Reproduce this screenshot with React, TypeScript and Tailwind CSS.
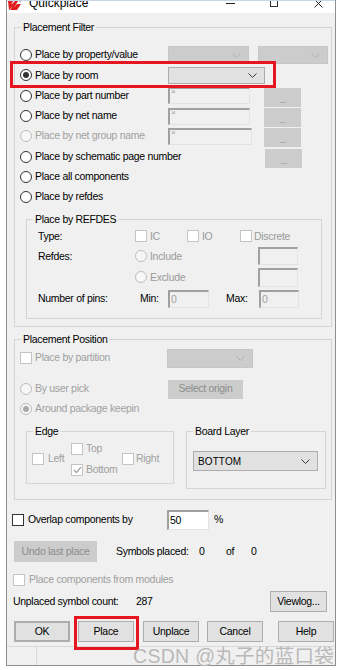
import React from 'react';

const FONT = "font-['Liberation_Sans',Arial,sans-serif]";

function Radio({ checked = false, disabled = false }: { checked?: boolean; disabled?: boolean }) {
  return (
    <div
      className={`w-[12px] h-[12px] shrink-0 rounded-full border flex items-center justify-center ${
        disabled ? 'border-[#bdbdbd] bg-[#f7f7f7]' : 'border-[#333333] bg-white'
      }`}
    >
      {checked && <div className={`w-[6px] h-[6px] rounded-full ${disabled ? 'bg-[#a8a8a8]' : 'bg-[#333333]'}`} />}
    </div>
  );
}

function Check({ checked = false, disabled = false }: { checked?: boolean; disabled?: boolean }) {
  return (
    <div
      className={`w-[12px] h-[12px] shrink-0 border flex items-center justify-center ${
        disabled ? 'border-[#c4c4c4] bg-white' : 'border-[#333333] bg-white'
      }`}
    >
      {checked && (
        <svg width="9" height="8" viewBox="0 0 9 8">
          <polyline points="1,4 3.5,6.5 8,1" fill="none" stroke={disabled ? '#a5a5a5' : '#333'} strokeWidth="1.2" />
        </svg>
      )}
    </div>
  );
}

function Chevron({ dark = false }: { dark?: boolean }) {
  return (
    <svg width="9" height="5" viewBox="0 0 9 5">
      <polyline points="0.5,0.5 4.5,4.5 8.5,0.5" fill="none" stroke={dark ? '#3a3a3a' : '#b0b0b0'} strokeWidth="1" />
    </svg>
  );
}

function Combo({ className, enabled = false, text }: { className: string; enabled?: boolean; text?: string }) {
  return (
    <div
      className={`flex items-center justify-between pr-[7px] border ${
        enabled ? 'bg-[#e1e1e1] border-[#adadad]' : 'bg-[#cccccc] border-[#c6c6c6]'
      } ${className}`}
    >
      <span className="pl-[4px] text-[10px] tracking-[0.1px] text-black">{text}</span>
      <Chevron dark={enabled} />
    </div>
  );
}

function TextBox({ className, text, white = false }: { className: string; text?: string; white?: boolean }) {
  return (
    <div
      className={`border-t-2 border-l-2 border-t-[#a0a0a0] border-l-[#a0a0a0] border-r border-b border-r-[#e3e3e3] border-b-[#e3e3e3] ${
        white ? 'bg-white text-black' : 'bg-[#f0f0f0] text-[#a0a0a0]'
      } ${className}`}
    >
      {text}
    </div>
  );
}

function Btn({ className, label, disabled = false }: { className: string; label: string; disabled?: boolean }) {
  return (
    <div
      className={`flex items-center justify-center border ${
        disabled ? 'bg-[#cccccc] border-[#cccccc] text-[#8c8c8c]' : 'bg-[#e1e1e1] border-[#adadad] text-black'
      } ${className}`}
    >
      {label}
    </div>
  );
}

function DotsBtn() {
  return (
    <div className="ml-[14px] mt-[3px] w-[37px] h-[19px] bg-[#cccccc] flex items-end justify-center pb-[2px] text-[#8c8c8c] text-[9px] leading-[9px]">
      ...
    </div>
  );
}

function Group({ label, className, children }: { label: string; className: string; children?: React.ReactNode }) {
  return (
    <div className={`relative border border-[#d5d5d5] ${className}`}>
      <span className="absolute -top-[7px] left-[6px] px-[2px] bg-[#f0f0f0] leading-[13px] text-black">{label}</span>
      {children}
    </div>
  );
}

function StarBox({ wide = false }: { wide?: boolean }) {
  return (
    <div
      className={`relative h-[17px] ${wide ? 'w-[84px]' : 'w-[82px]'} border-t-2 border-l-2 border-t-[#a0a0a0] border-l-[#a0a0a0] border-r border-b border-r-[#e3e3e3] border-b-[#e3e3e3] bg-[#f0f0f0]`}
    >
      <span className="absolute left-[1px] -top-[3px] text-[8px] text-[#9a9a9a]">×</span>
    </div>
  );
}

function RadioRow({
  label,
  checked,
  disabled,
  children,
}: {
  label: string;
  checked?: boolean;
  disabled?: boolean;
  children?: React.ReactNode;
}) {
  return (
    <div className="relative h-[20.3px] flex items-center">
      <div className="w-[148px] flex items-center">
        <Radio checked={checked} disabled={disabled} />
        <span className={`ml-[3px] whitespace-nowrap ${disabled ? 'text-[#a0a0a0]' : 'text-black'}`}>{label}</span>
      </div>
      {children}
    </div>
  );
}

export default function App() {
  return (
    <div className={`relative w-[339px] h-[670px] bg-white overflow-hidden text-[10.5px] tracking-[-0.3px] ${FONT}`}>
      <div className="ml-[6px] w-[330px] h-[666px] border-l border-r border-b border-[#8f8f8f] flex flex-col bg-[#f0f0f0]">
        {/* title bar */}
        <div className="h-[13px] bg-white overflow-hidden border-t border-[#c9d6e8] flex items-start">
          <svg className="ml-[1px] -mt-[2px]" width="14" height="11" viewBox="0 0 14 11">
            <polygon points="0,2 5,2 3,6 7,2 10,2 6,9 9,5 13,5 9,11 2,11 5,7 1,11" fill="#e01b1b" />
            <polygon points="10,0 14,0 12,3" fill="#222" />
          </svg>
          <span className="ml-[7px] -mt-[5px] text-[12px] tracking-normal leading-[14px] text-black">Quickplace</span>
          <div className="ml-[138px] mt-[2px] w-[9px] h-[1px] bg-[#222]" />
          <div className="ml-[35px] -mt-[3px] w-[8px] h-[9px] border border-[#333]" />
          <svg className="ml-[36px] -mt-[2px]" width="9" height="9" viewBox="0 0 9 9">
            <path d="M0.5 0.5 L8.5 8.5 M8.5 0.5 L0.5 8.5" stroke="#222" strokeWidth="1" />
          </svg>
        </div>

        {/* Placement Filter */}
        <Group label="Placement Filter" className="ml-[7px] mt-[14px] w-[318px] h-[300px] pl-[5px] pt-[17px]">
          <RadioRow label="Place by property/value">
            <Combo className="w-[81px] h-[18px]" />
            <Combo className="ml-[9px] w-[70px] h-[18px]" />
          </RadioRow>
          <RadioRow label="Place by room" checked>
            <Combo className="w-[97px] h-[17px]" enabled />
            <div className="absolute -left-[10px] -top-[4px] w-[266px] h-[27px] border-[3px] border-[#e5161f] z-10" />
          </RadioRow>
          <RadioRow label="Place by part number">
            <StarBox />
            <DotsBtn />
          </RadioRow>
          <RadioRow label="Place by net name">
            <StarBox />
            <DotsBtn />
          </RadioRow>
          <RadioRow label="Place by net group name" disabled>
            <StarBox wide />
            <div className="-ml-[2px]">
              <DotsBtn />
            </div>
          </RadioRow>
          <RadioRow label="Place by schematic page number">
            <div className="ml-[83px]">
              <DotsBtn />
            </div>
          </RadioRow>
          <RadioRow label="Place all components" />
          <RadioRow label="Place by refdes" />

          <Group label="Place by REFDES" className="mt-[12px] ml-[6px] w-[296px] h-[100px] pt-[6px] pl-[11px]">
            <div className="h-[20px] flex items-center">
              <span className="w-[97px]">Type:</span>
              <div className="w-[52px] flex items-center text-[#9a9a9a]">
                <Check disabled />
                <span className="ml-[3px]">IC</span>
              </div>
              <div className="w-[53px] flex items-center text-[#9a9a9a]">
                <Check disabled />
                <span className="ml-[3px]">IO</span>
              </div>
              <div className="flex items-center text-[#9a9a9a]">
                <Check disabled />
                <span className="ml-[2px]">Discrete</span>
              </div>
            </div>
            <div className="h-[20px] flex items-center">
              <span className="w-[97px]">Refdes:</span>
              <div className="w-[123px] flex items-center text-[#9a9a9a]">
                <Radio disabled />
                <span className="ml-[3px]">Include</span>
              </div>
              <TextBox className="w-[40px] h-[18px]" />
            </div>
            <div className="mt-[1px] h-[20px] flex items-center">
              <span className="w-[97px]" />
              <div className="w-[123px] flex items-center text-[#9a9a9a]">
                <Radio disabled />
                <span className="ml-[3px]">Exclude</span>
              </div>
              <TextBox className="w-[40px] h-[19px]" />
            </div>
            <div className="mt-[1px] h-[21px] flex items-center">
              <span className="w-[102px]">Number of pins:</span>
              <span className="w-[28px]">Min:</span>
              <TextBox className="w-[41px] h-[18px] pl-[1px] leading-[15px]" text="0" />
              <span className="ml-[17px] w-[33px]">Max:</span>
              <TextBox className="w-[40px] h-[18px] pl-[1px] leading-[15px]" text="0" />
            </div>
          </Group>
        </Group>

        {/* Placement Position */}
        <Group label="Placement Position" className="ml-[7px] mt-[12px] w-[318px] h-[161px] pl-[5px] pt-[8px]">
          <div className="h-[20px] flex items-center">
            <div className="w-[147px] flex items-center">
              <Check disabled />
              <span className="ml-[3px] text-[#a0a0a0]">Place by partition</span>
            </div>
            <Combo className="w-[86px] h-[19px]" />
          </div>
          <div className="mt-[11px] h-[20px] flex items-center">
            <div className="w-[148px] flex items-center">
              <Radio disabled />
              <span className="ml-[3px] text-[#a0a0a0]">By user pick</span>
            </div>
            <Btn className="w-[75px] h-[19px]" label="Select origin" disabled />
          </div>
          <div className="h-[20px] flex items-center">
            <Radio checked disabled />
            <span className="ml-[3px] text-[#a0a0a0]">Around package keepin</span>
          </div>

          <div className="mt-[12px] flex items-start">
            <Group label="Edge" className="ml-[6px] w-[148px] h-[53px] pl-[5px] pt-[3px]">
              <div className="h-full flex items-center">
                <div className="w-[39px] flex items-center text-[#a0a0a0]">
                  <Check disabled />
                  <span className="ml-[4px]">Left</span>
                </div>
                <div className="w-[51px] flex flex-col">
                  <div className="h-[21px] flex items-center text-[#a0a0a0]">
                    <Check disabled />
                    <span className="ml-[3px]">Top</span>
                  </div>
                  <div className="h-[21px] flex items-center text-[#a0a0a0]">
                    <Check checked disabled />
                    <span className="ml-[3px]">Bottom</span>
                  </div>
                </div>
                <div className="flex items-center text-[#a0a0a0]">
                  <Check disabled />
                  <span className="ml-[2px]">Right</span>
                </div>
              </div>
            </Group>
            <Group label="Board Layer" className="ml-[12px] w-[140px] h-[58px] pl-[6px] pt-[19px]">
              <Combo className="w-[125px] h-[20px]" enabled text="BOTTOM" />
            </Group>
          </div>
        </Group>

        {/* Overlap */}
        <div className="mt-[10px] h-[20px] flex items-center">
          <div className="ml-[5px] w-[155px] flex items-center">
            <Check />
            <span className="ml-[4px]">Overlap components by</span>
          </div>
          <TextBox className="w-[42px] h-[20px] pl-[1px] leading-[17px]" text="50" white />
          <span className="ml-[5px]">%</span>
        </div>

        {/* Undo */}
        <div className="mt-[11px] h-[21px] flex items-center">
          <Btn className="ml-[7px] w-[83px] h-[21px]" label="Undo last place" disabled />
          <span className="ml-[19px] w-[83px]">Symbols placed:</span>
          <span className="w-[27px]">0</span>
          <span className="w-[25px]">of</span>
          <span>0</span>
        </div>

        {/* Modules */}
        <div className="mt-[8px] h-[20px] flex items-center">
          <div className="ml-[6px]">
            <Check disabled />
          </div>
          <span className="ml-[4px] text-[#a0a0a0]">Place components from modules</span>
        </div>

        {/* Unplaced */}
        <div className="mt-[1px] h-[21px] flex items-center">
          <span className="ml-[6px] w-[123px]">Unplaced symbol count:</span>
          <span>287</span>
          <Btn className="ml-auto mr-[8px] w-[57px] h-[21px]" label="Viewlog..." />
        </div>

        {/* Buttons */}
        <div className="mt-[9px] h-[21px] flex items-center">
          <Btn className="ml-[7px] w-[56px] h-[21px] border-2 border-[#3d8ee0]" label="OK" />
          <div className="relative ml-[8px]">
            <Btn className="w-[56px] h-[21px]" label="Place" />
            <div className="absolute -left-[4px] -top-[5px] w-[65px] h-[34px] border-[3px] border-[#e5161f]" />
          </div>
          <Btn className="ml-[9px] w-[56px] h-[21px]" label="Unplace" />
          <Btn className="ml-[8px] w-[56px] h-[21px]" label="Cancel" />
          <Btn className="ml-[15px] w-[56px] h-[21px]" label="Help" />
        </div>

        {/* Status bar */}
        <div className="mt-auto h-[19px] border-t border-[#d9d9d9] flex">
          <div className="w-[30px] h-full border-r border-[#d9d9d9]" />
        </div>
      </div>

      {/* watermark */}
      <span className="absolute left-[133px] top-[644px] text-[19.5px] leading-[24px] tracking-[0.3px] text-[#b9b9b9] font-['Liberation_Sans','Noto_Sans_CJK_SC',sans-serif] whitespace-nowrap">
        CSDN @丸子的蓝口袋
      </span>
    </div>
  );
}
